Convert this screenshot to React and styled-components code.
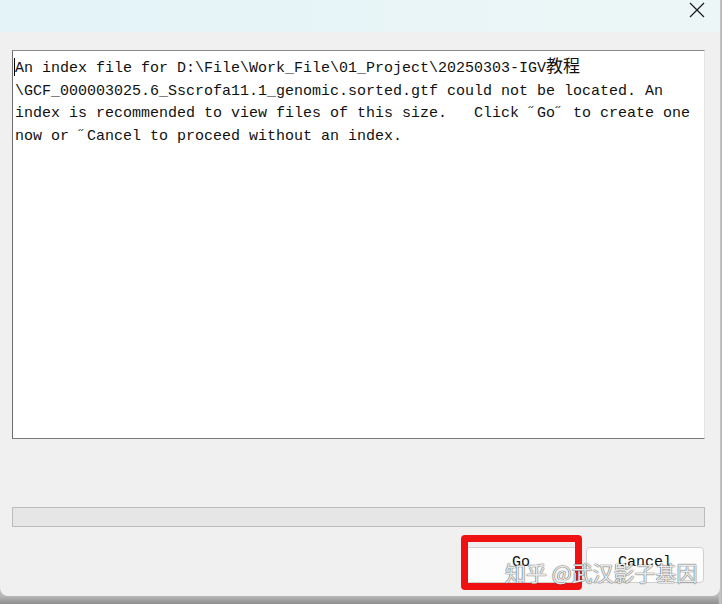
import React from "react";
import styled, { createGlobalStyle } from "styled-components";

const Global = createGlobalStyle`
  html, body {
    margin: 0;
    padding: 0;
    width: 722px;
    height: 604px;
    overflow: hidden;
    background: linear-gradient(to bottom, #b8b8b8 0, #b8b8b8 596px, #a2a2a2 600px, #8e8e8e 604px);
  }
  #root { width: 722px; height: 604px; }
`;

const Page = styled.div`
  width: 722px;
  height: 604px;
  display: flex;
  align-items: flex-start;
  background: linear-gradient(to right, transparent 718px, #c9c9c9 720px, #b0b0b0 722px);
`;

const Window = styled.div`
  width: 720px;
  height: 596px;
  display: flex;
  flex-direction: column;
  background: #f0f0f0;
  border-bottom-right-radius: 8px;
  border-bottom-left-radius: 8px;
  overflow: hidden;
`;

const TitleBar = styled.div`
  height: 32px;
  flex: none;
  display: flex;
  justify-content: flex-end;
  align-items: flex-start;
  padding-right: 15px;
  background: linear-gradient(to right, #e3f3f8, #e9f5f7 60%, #ecf6f6);
`;

const CloseIcon = styled.svg`
  margin-top: 2px;
  width: 16px;
  height: 16px;
`;

const Body = styled.div`
  flex: 1;
  display: flex;
  flex-direction: column;
  padding: 18px 15px 0 12px;
`;

const MessageBox = styled.div`
  height: 389px;
  box-sizing: border-box;
  background: #ffffff;
  border: 1px solid #8a8a8a;
  border-left-color: #6e6e6e;
  border-right-color: #e4e4e4;
  border-bottom-color: #7a7a7a;
  padding: 3px 0 0 2px;
  font-family: "Liberation Mono", monospace;
  font-size: 15px;
  line-height: 22.7px;
  color: #111;
`;

const Line = styled.div`
  white-space: pre;
`;

const Cjk = styled.span`
  font-family: "Noto Sans CJK SC", sans-serif;
  font-size: 17px;
`;

const Caret = styled.span`
  display: inline-block;
  width: 1px;
  height: 18px;
  margin-left: -1px;
  background: #000;
  vertical-align: -4px;
`;

const Progress = styled.div`
  margin-top: 68px;
  height: 20px;
  box-sizing: border-box;
  background: #e6e6e6;
  border: 1px solid #bcbcbc;
`;

const ButtonRow = styled.div`
  margin-top: 20px;
  display: flex;
  justify-content: flex-end;
  gap: 6px;
  padding-right: 1px;
`;

const ButtonWrap = styled.div`
  position: relative;
`;

const Button = styled.div`
  width: 118px;
  height: 36px;
  box-sizing: border-box;
  background: #fdfdfd;
  border: 1px solid #d0d0d0;
  border-radius: 4px;
  display: flex;
  align-items: center;
  justify-content: center;
  padding-bottom: 5px;
  font-family: "Liberation Mono", monospace;
  font-size: 15px;
  color: #111;
`;

const Highlight = styled.div`
  position: absolute;
  left: -1px;
  top: -12px;
  width: 121px;
  height: 55px;
  box-sizing: border-box;
  border: 7px solid #f01212;
  border-radius: 4px;
  pointer-events: none;
`;

const Watermark = styled.div`
  position: absolute;
  left: 505px;
  top: 559px;
  font-family: "Noto Sans CJK SC", sans-serif;
  font-size: 21px;
  line-height: 26px;
  letter-spacing: 0px;
  color: rgba(255, 255, 255, 0.9);
  text-shadow: 0 0 1px rgba(60, 60, 60, 0.9), 0 0 1px rgba(60, 60, 60, 0.9);
  white-space: pre;
  pointer-events: none;
`;

export default function App() {
  return (
    <>
      <Global />
      <Page>
        <Window>
          <TitleBar>
            <CloseIcon viewBox="0 0 16 16">
              <path d="M1 1 L15 15 M15 1 L1 15" stroke="#1a1a1a" strokeWidth="1.2" fill="none" />
            </CloseIcon>
          </TitleBar>
          <Body>
            <MessageBox>
              <Line>
                <Caret />
                {"An index file for D:\\File\\Work_File\\01_Project\\20250303-IGV"}
                <Cjk>教程</Cjk>
              </Line>
              <Line>{"\\GCF_000003025.6_Sscrofa11.1_genomic.sorted.gtf could not be located. An"}</Line>
              <Line>{"index is recommended to view files of this size.   Click \u02DDGo\u02DD to create one"}</Line>
              <Line>{"now or \u02DDCancel to proceed without an index."}</Line>
            </MessageBox>
            <Progress />
            <ButtonRow>
              <ButtonWrap>
                <Button>Go</Button>
                <Highlight />
              </ButtonWrap>
              <ButtonWrap>
                <Button>Cancel</Button>
              </ButtonWrap>
            </ButtonRow>
          </Body>
        </Window>
      </Page>
      <Watermark>知乎 @武汉影子基因</Watermark>
    </>
  );
}
